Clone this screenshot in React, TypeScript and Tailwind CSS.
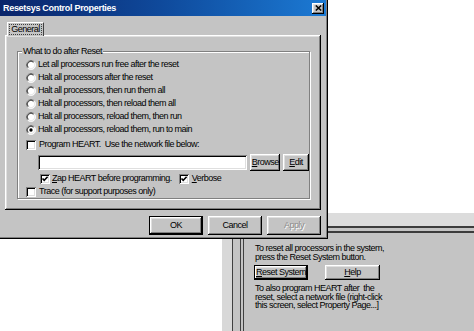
import React from "react";

const raised =
  "shadow-[inset_-1px_-1px_#000,inset_1px_1px_#fff,inset_-2px_-2px_#808080,inset_2px_2px_#dfdfdf]";
const sunken =
  "shadow-[inset_1px_1px_#808080,inset_-1px_-1px_#fff,inset_2px_2px_#000,inset_-2px_-2px_#dfdfdf]";

function Radio({ checked }: { checked?: boolean }) {
  return (
    <svg width="10" height="10" viewBox="0 0 12 12" className="shrink-0">
      <circle cx="6" cy="6" r="5.5" fill="#fff" />
      <path d="M9.9 2.1 A5.5 5.5 0 0 0 2.1 9.9" stroke="#808080" strokeWidth="1" fill="none" />
      <path d="M9.9 2.1 A5.5 5.5 0 0 1 2.1 9.9" stroke="#fff" strokeWidth="1" fill="none" />
      <path d="M9.2 2.8 A4.5 4.5 0 0 0 2.8 9.2" stroke="#000" strokeWidth="1" fill="none" />
      <path d="M9.2 2.8 A4.5 4.5 0 0 1 2.8 9.2" stroke="#dfdfdf" strokeWidth="1" fill="none" />
      {checked && <circle cx="6" cy="6" r="2" fill="#000" />}
    </svg>
  );
}

function Check({ checked }: { checked?: boolean }) {
  return (
    <div className={`relative w-[10px] h-[10px] shrink-0 bg-white ${sunken}`}>
      {checked && (
        <svg width="10" height="10" viewBox="0 0 10 10" className="absolute left-0 top-0">
          <path d="M2.5 4.5 L4.2 6.3 L7.6 2.8" stroke="#000" strokeWidth="1.6" fill="none" />
        </svg>
      )}
    </div>
  );
}

function Btn({
  children,
  w,
  def,
  disabled,
  h = "h-[19px]",
}: {
  children: React.ReactNode;
  w: string;
  def?: boolean;
  disabled?: boolean;
  h?: string;
}) {
  const inner = (
    <div
      className={`flex items-center justify-center w-full h-full bg-[#c4c4c4] whitespace-nowrap ${raised} ${
        disabled ? "text-[#8c8c8c] [text-shadow:1px_1px_0_#fff]" : ""
      }`}
    >
      {children}
    </div>
  );
  return def ? (
    <div className={`${w} ${h} border border-black`}>{inner}</div>
  ) : (
    <div className={`${w} ${h}`}>{inner}</div>
  );
}

const options = [
  "Let all processors run free after the reset",
  "Halt all processors after the reset",
  "Halt all processors, then run them all",
  "Halt all processors, then reload them all",
  "Halt all processors, reload them, then run",
  "Halt all processors, reload them, run to main",
];

export default function App() {
  return (
    <div className="relative w-[474px] h-[331px] overflow-hidden bg-white text-black text-[9px] tracking-[-0.5px] leading-none font-['Liberation_Sans',Arial,sans-serif]">
      {/* background window */}
      <div className="absolute left-[222px] top-[210px] right-0 bottom-0 flex flex-col">
        <div className="h-[3px] bg-white" />
        <div className="h-[13px] bg-[#dcdcdc]" />
        <div className="h-[2px] bg-[#3c3c3c]" />
        <div className="h-[3px] bg-[#c4c4c4]" />
        <div className="h-[2px] bg-[#3c3c3c]" />
        <div className="flex-1 flex bg-[#c4c4c4]">
          <div className="w-[11px] bg-[#d8d8d8] border-r border-[#404040]" />
          <div className="w-[8px] border-r border-[#404040]" />
          <div className="w-[3px] border-r border-[#404040]" />
          <div className="pl-[11px] pt-[11px] flex flex-col">
            <div className="leading-[9px]">
              <div>To reset all processors in the system,</div>
              <div>press the Reset System button.</div>
            </div>
            <div className="flex gap-[17px] mt-[3px] -ml-[1px]">
              <Btn w="w-[54px]" h="h-[15px]" def>
                <span>
                  <span className="underline">R</span>eset System
                </span>
              </Btn>
              <Btn w="w-[55px]" h="h-[15px]">
                <span>
                  <span className="underline">H</span>elp
                </span>
              </Btn>
            </div>
            <div className="leading-[8.6px] mt-[4px]">
              <div>To also program HEART after&nbsp; the</div>
              <div>reset, select a network file (right-click</div>
              <div>this screen, select Property Page...]</div>
            </div>
          </div>
        </div>
      </div>

      {/* dialog */}
      <div className="absolute left-0 top-0 w-[328px] h-[239px] bg-[#c4c4c4] shadow-[inset_-1px_-1px_#000,inset_-2px_-2px_#808080] flex flex-col">
        <div className="h-[16px] mr-[2px] flex items-center justify-between pl-[3px] pr-[2px] bg-linear-to-r from-[#0a246a] via-[#0f4a9c] to-[#1c7ad4]">
          <span className="text-white font-bold text-[9px] tracking-[-0.3px]">Resetsys Control Properties</span>
          <div className={`w-[12px] h-[11px] bg-[#c4c4c4] flex items-center justify-center ${raised}`}>
            <svg width="7" height="6" viewBox="0 0 7 6">
              <path d="M0.8 0.5 L6.2 5.5 M6.2 0.5 L0.8 5.5" stroke="#000" strokeWidth="1.5" />
            </svg>
          </div>
        </div>

        <div className="pl-[5px] pt-[6px] pr-[7px] flex flex-col">
          {/* tab */}
          <div className="flex">
            <div className="ml-[2px] w-[37px] h-[14px] bg-[#c4c4c4] border-t border-l border-white border-r border-r-[#404040] flex items-center justify-center relative z-10 -mb-[1px]">
              <span className="border border-dotted border-[#404040] px-[1px] leading-[9px]">General</span>
            </div>
          </div>
          {/* panel */}
          <div className={`h-[175px] pt-[16px] pl-[12px] pr-[11px] ${raised}`}>
            <div className="relative h-[148px] border border-[#808080] shadow-[inset_1px_1px_#fff,1px_1px_#fff] pl-[8px] pt-[6px]">
              <div className="absolute left-[4px] -top-[5px] px-[1px] bg-[#c4c4c4]">What to do after Reset</div>
              {options.map((o, i) => (
                <div key={o} className="h-[13px] flex items-center gap-[2px]">
                  <Radio checked={i === 5} />
                  <span>{o}</span>
                </div>
              ))}
              <div className="h-[13px] mt-[2px] flex items-center gap-[3px]">
                <Check />
                <span>Program HEART.&nbsp; Use the network file below:</span>
              </div>
              <div className="h-[17px] mt-[3px] ml-[12px] flex items-center gap-[3px]">
                <div className={`w-[211px] h-[15px] bg-white ${sunken}`} />
                <Btn w="w-[30px]" h="h-[17px]">
                  <span>
                    <span className="underline">B</span>rowse
                  </span>
                </Btn>
                <Btn w="w-[26px]" h="h-[17px]">
                  <span>
                    <span className="underline">E</span>dit
                  </span>
                </Btn>
              </div>
              <div className="h-[13px] mt-[1px] ml-[14px] flex items-center">
                <Check checked />
                <span className="ml-[2px]">
                  <span className="underline">Z</span>ap HEART before programming.
                </span>
                <span className="ml-[7px]">
                  <Check checked />
                </span>
                <span className="ml-[3px]">
                  <span className="underline">V</span>erbose
                </span>
              </div>
              <div className="h-[13px] flex items-center gap-[3px]">
                <Check />
                <span>Trace (for support purposes only)</span>
              </div>
            </div>
          </div>
          {/* buttons */}
          <div className="flex justify-end gap-[5px] mt-[6px]">
            <Btn w="w-[54px]" def>
              OK
            </Btn>
            <Btn w="w-[54px]">Cancel</Btn>
            <Btn w="w-[54px]" disabled>
              Apply
            </Btn>
          </div>
        </div>
      </div>
    </div>
  );
}
